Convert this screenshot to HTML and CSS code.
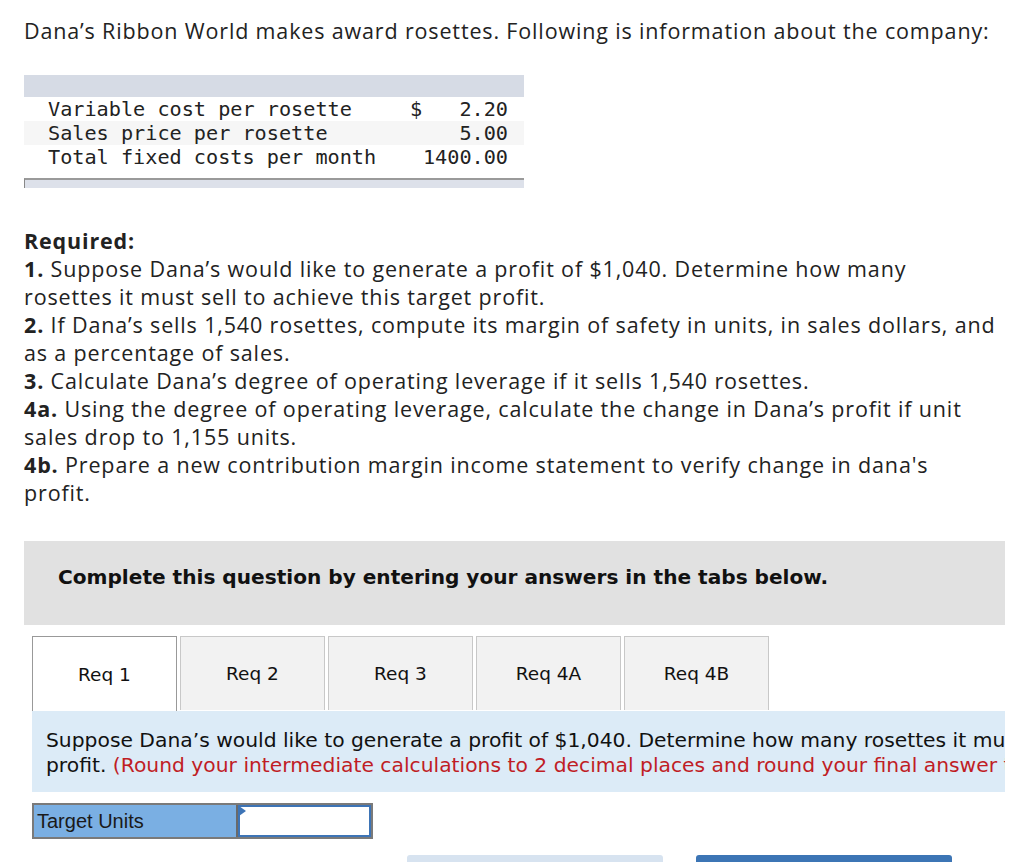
FILE: index.html
```html
<!DOCTYPE html>
<html>
<head>
<meta charset="utf-8">
<link rel="stylesheet" href="styles.css">
</head>
<body>
<div class="page">
  <p class="intro">Dana’s Ribbon World makes award rosettes. Following is information about the company:</p>

  <div class="data">
    <div class="data-head"></div>
    <div class="row"><span class="lbl">Variable cost per rosette</span><span class="cur">$</span><span class="val">2.20</span></div>
    <div class="row alt"><span class="lbl">Sales price per rosette</span><span class="cur"></span><span class="val">5.00</span></div>
    <div class="row"><span class="lbl">Total fixed costs per month</span><span class="cur"></span><span class="val">1400.00</span></div>
    <div class="data-foot"></div>
  </div>

  <div class="required">
    <p><b>Required:</b></p>
    <p><b>1.</b> Suppose Dana’s would like to generate a profit of $1,040. Determine how many rosettes it must sell to achieve this target profit.</p>
    <p><b>2.</b> If Dana’s sells 1,540 rosettes, compute its margin of safety in units, in sales dollars, and as a percentage of sales.</p>
    <p><b>3.</b> Calculate Dana’s degree of operating leverage if it sells 1,540 rosettes.</p>
    <p><b>4a.</b> Using the degree of operating leverage, calculate the change in Dana’s profit if unit sales drop to 1,155 units.</p>
    <p><b>4b.</b> Prepare a new contribution margin income statement to verify change in dana's profit.</p>
  </div>

  <div class="instruct">Complete this question by entering your answers in the tabs below.</div>

  <div class="tabs">
    <div class="tab active">Req 1</div>
    <div class="tab">Req 2</div>
    <div class="tab">Req 3</div>
    <div class="tab">Req 4A</div>
    <div class="tab">Req 4B</div>
  </div>

  <div class="panel">
    <p class="panel-text">Suppose Dana’s would like to generate a profit of $1,040. Determine how many rosettes it must sell to achieve this target</p>
    <p class="panel-text">profit. <span class="red">(Round your intermediate calculations to 2 decimal places and round your final answer to the nearest whole number.)</span></p>
  </div>

  <div class="answer">
    <div class="ans-label">Target Units</div>
    <div class="ans-input"><span class="flag"></span></div>
  </div>

  <div class="buttons">
    <div class="btn btn-light"></div>
    <div class="btn btn-dark"></div>
  </div>
</div>
</body>
</html>
```

FILE: styles.css
```css
html, body {
  margin: 0;
  padding: 0;
  background: #fff;
}
.page {
  padding: 0 19px 0 24px;
  font-family: "Open Sans", "Liberation Sans", sans-serif;
  color: #222;
}
.intro {
  margin: 0;
  padding-top: 17px;
  font-size: 21.5px;
  letter-spacing: 0.85px;
  line-height: 28px;
}
.data {
  width: 500px;
  margin-top: 30px;
  font-family: "DejaVu Sans Mono", monospace;
  font-size: 20.2px;
  color: #222;
}
.data-head {
  height: 22px;
  background: #d6dbe5;
}
.row {
  display: flex;
  height: 24px;
  line-height: 24px;
  padding-left: 24px;
  white-space: pre;
}
.row.alt {
  background: #f6f6f6;
}
.lbl { width: 362px; }
.cur { width: 12px; }
.val { width: 86px; text-align: right; }
.data-foot {
  margin-top: 9px;
  height: 8px;
  background: #dde1ea;
  border-top: 2px solid #9a9a9a;
  border-left: 1px solid #888;
}
.required {
  margin-top: 39px;
  max-width: 972px;
  font-size: 21.5px;
  letter-spacing: 0.85px;
  line-height: 28px;
}
.required p {
  margin: 0;
}
.instruct {
  margin-top: 34px;
  background: #e1e1e1;
  height: 84px;
  box-sizing: border-box;
  padding: 24px 0 0 34px;
  font-family: "DejaVu Sans", Verdana, sans-serif;
  font-weight: bold;
  font-size: 20.1px;
  color: #111;
}
.tabs {
  display: flex;
  gap: 3px;
  margin: 11px 0 0 8px;
  height: 74px;
}
.tab {
  width: 145px;
  box-sizing: border-box;
  background: #f2f2f2;
  border: 1px solid #c8c8c8;
  border-bottom: none;
  display: flex;
  align-items: center;
  justify-content: center;
  font-family: "DejaVu Sans", Verdana, sans-serif;
  font-size: 18.5px;
  color: #111;
}
.tab.active {
  background: #fff;
  border-color: #999;
  height: 75px;
  position: relative;
  z-index: 1;
}
.panel {
  margin-left: 8px;
  margin-top: 1px;
  height: 81px;
  background: #dcebf7;
  box-sizing: border-box;
  padding: 17px 0 0 14px;
  overflow: hidden;
  font-family: "DejaVu Sans", Verdana, sans-serif;
  font-size: 20.3px;
  line-height: 25px;
  color: #111;
}
.panel-text {
  margin: 0;
  white-space: nowrap;
}
.red { color: #c01d25; }
.answer {
  display: flex;
  margin: 11px 0 0 8px;
  width: 341px;
  height: 36px;
  border: 2px solid #7a7a7a;
  box-sizing: border-box;
}
.ans-label {
  width: 199px;
  background: #7aafe3;
  border-right: 2px solid #6a6a6a;
  font-family: "Liberation Sans", Arial, sans-serif;
  font-size: 20px;
  line-height: 32px;
  padding-left: 3px;
  color: #1a1a1a;
}
.ans-input {
  flex: 1;
  background: #fff;
  border: 2px solid #3d74b6;
  position: relative;
}
.flag {
  position: absolute;
  left: -1px;
  top: -1px;
  width: 0;
  height: 0;
  border-top: 5px solid transparent;
  border-bottom: 5px solid transparent;
  border-left: 7px solid #3d74b6;
}
.buttons {
  display: flex;
  gap: 33px;
  margin: 16px 0 0 383px;
}
.btn {
  width: 256px;
  height: 30px;
  border-radius: 3px 3px 0 0;
}
.btn-light { background: #d7e3f0; }
.btn-dark { background: #3c75b5; }
```
